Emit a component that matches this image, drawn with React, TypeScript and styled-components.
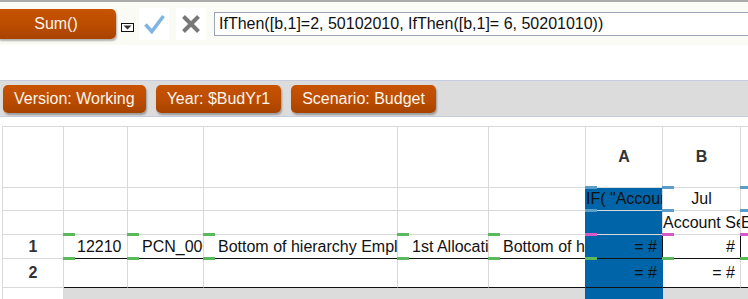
import React from "react";
import styled, { createGlobalStyle } from "styled-components";

const Global = createGlobalStyle`
  html, body { margin: 0; padding: 0; background: #fff; }
  body { font-family: "Liberation Sans", Arial, sans-serif; }
  * { box-sizing: border-box; }
`;

const Page = styled.div`
  width: 748px;
  height: 299px;
  overflow: hidden;
  display: flex;
  flex-direction: column;
  background: #fff;
`;

const Toolbar = styled.div`
  height: 45px;
  flex-shrink: 0;
  border-top: 2px solid #ababab;
  background: #fbfbf6;
  display: flex;
  align-items: center;
`;

const SumButton = styled.button`
  margin-left: -4px;
  width: 120px;
  height: 30px;
  flex-shrink: 0;
  border: none;
  border-radius: 5px;
  background: linear-gradient(to bottom, #c85300 0%, #b94b00 60%, #a64300 100%);
  box-shadow: 1px 2px 2px rgba(0, 0, 0, 0.3);
  color: #fbf5ee;
  font-family: "Liberation Sans", Arial, sans-serif;
  font-size: 16px;
  padding: 0;
`;

const DropBox = styled.div`
  margin-left: 5px;
  margin-top: 8px;
  width: 13px;
  height: 9px;
  flex-shrink: 0;
  border: 1px solid #111;
  background: #fff;
  display: flex;
  align-items: center;
  justify-content: center;
`;

const IconButton = styled.div<{ $ml: number }>`
  margin-left: ${(p) => p.$ml}px;
  width: 30px;
  height: 32px;
  flex-shrink: 0;
  background: #fff;
  display: flex;
  align-items: center;
  justify-content: center;
`;

const FormulaInput = styled.div`
  margin-left: 8px;
  width: 600px;
  height: 24px;
  flex-shrink: 0;
  border: 1px solid #9ca5b5;
  background: #fff;
  padding-left: 4px;
  display: flex;
  align-items: center;
  font-size: 16px;
  color: #111;
  white-space: nowrap;
`;

const Band = styled.div`
  margin-top: 35px;
  height: 37px;
  flex-shrink: 0;
  border-top: 1px solid #c6cde0;
  border-bottom: 1px solid #c6cde0;
  background: #dcdcdc;
  display: flex;
  align-items: center;
  gap: 10px;
  padding-left: 3px;
  padding-top: 1px;
`;

const PovButton = styled.button`
  height: 28px;
  padding: 0 11px;
  border: none;
  border-radius: 5px;
  background: linear-gradient(to bottom, #c85300 0%, #b94b00 60%, #a64300 100%);
  box-shadow: 1px 2px 2px rgba(0, 0, 0, 0.3);
  color: #fbf5ee;
  font-family: "Liberation Sans", Arial, sans-serif;
  font-size: 16px;
  white-space: nowrap;
`;

const COLS = [61, 64, 76, 194, 91, 97, 77, 78, 80];
const ROWS = [61, 23, 24, 24, 29, 12];

const Grid = styled.div`
  margin-top: 9px;
  margin-left: 2px;
  display: grid;
  grid-template-columns: ${COLS.map((c) => `${c}px`).join(" ")};
  grid-template-rows: ${ROWS.map((r) => `${r}px`).join(" ")};
  border-left: 1px solid #d9d9d9;
  border-top: 1px solid #d9d9d9;
  width: max-content;
  flex-shrink: 0;
`;

const Cell = styled.div<{
  $bg?: string;
  $bb?: string;
  $br?: string;
  $pl?: number;
  $pr?: number;
}>`
  position: relative;
  display: flex;
  align-items: center;
  min-width: 0;
  background: ${(p) => p.$bg ?? "transparent"};
  border-right: 1px solid ${(p) => p.$br ?? "#d9d9d9"};
  border-bottom: 1px solid ${(p) => p.$bb ?? "#d9d9d9"};
  padding-left: ${(p) => p.$pl ?? 0}px;
  padding-right: ${(p) => p.$pr ?? 0}px;
`;

const CellText = styled.span<{ $align?: string; $bold?: boolean }>`
  display: block;
  width: 100%;
  overflow: hidden;
  white-space: nowrap;
  text-align: ${(p) => p.$align ?? "left"};
  font-size: 16px;
  font-weight: ${(p) => (p.$bold ? 700 : 400)};
  color: ${(p) => (p.$bold ? "#333" : "#111")};
`;

const Mark = styled.span<{ $color: string; $at: "top" | "bottom" }>`
  position: absolute;
  left: -1px;
  ${(p) => (p.$at === "top" ? "top: -2px;" : "bottom: -2px;")}
  width: 12px;
  height: 3px;
  background: ${(p) => p.$color};
  z-index: 2;
`;

type MarkDef = { color: string; at: "top" | "bottom" };
type CellDef = {
  t?: string;
  al?: "left" | "center" | "right";
  b?: boolean;
  bg?: string;
  pl?: number;
  pr?: number;
  bb?: string;
  br?: string;
  marks?: MarkDef[];
};

const GREEN = "#5cb85c";
const SKY = "#5b9dc7";
const PINK = "#d65ac6";
const BLUE = "#0064a8";
const GREY = "#dcdcdc";
const BLACK = "#111";

const e = (n: number, d: CellDef = {}): CellDef[] => Array.from({ length: n }, () => ({ ...d }));

const sky: MarkDef[] = [{ color: SKY, at: "top" }];
const g2: MarkDef[] = [
  { color: GREEN, at: "top" },
  { color: GREEN, at: "bottom" },
];
const pg: MarkDef[] = [
  { color: PINK, at: "top" },
  { color: GREEN, at: "bottom" },
];

const rows: CellDef[][] = [
  [
    ...e(6),
    { t: "A", al: "center", b: true },
    { t: "B", al: "center", b: true },
    {},
  ],
  [
    ...e(5),
    { br: BLUE },
    { t: 'IF( "Account Segment"', bg: BLUE, marks: sky },
    { t: "Jul", al: "center", marks: sky },
    { marks: sky },
  ],
  [
    ...e(5),
    { br: BLUE },
    { bg: BLUE, marks: sky },
    { t: "Account Segment", marks: sky },
    { t: "Entity", marks: sky },
  ],
  [
    { t: "1", al: "center", b: true },
    { t: "12210", pl: 13, bb: BLACK, marks: g2 },
    { t: "PCN_0001", pl: 14, bb: BLACK, marks: g2 },
    { t: "Bottom of hierarchy Employee", pl: 14, bb: BLACK, marks: g2 },
    { t: "1st Allocation", pl: 14, bb: BLACK, marks: g2 },
    { t: "Bottom of hierarchy", pl: 14, bb: BLACK, br: BLUE, marks: g2 },
    { t: "= #", al: "right", pr: 5, bg: BLUE, bb: BLACK, br: BLACK, marks: pg },
    { t: "#", al: "right", pr: 5, bb: BLACK, br: BLACK, marks: pg },
    { bb: BLACK, marks: pg },
  ],
  [
    { t: "2", al: "center", b: true },
    ...e(4, { bb: BLACK }),
    { bb: BLACK, br: BLUE },
    { t: "= #", al: "right", pr: 5, bg: BLUE, bb: BLACK, br: BLUE },
    { t: "= #", al: "right", pr: 5, bb: BLACK },
    { bb: BLACK },
  ],
  [
    { bb: "transparent" },
    ...e(4, { bg: GREY, bb: GREY, br: GREY }),
    { bg: GREY, bb: GREY, br: BLUE },
    { bg: BLUE, bb: BLUE, br: BLUE },
    ...e(2, { bg: GREY, bb: GREY, br: GREY }),
  ],
];

const CheckIcon = () => (
  <svg width="21" height="20" viewBox="0 0 21 20">
    <path d="M1.5 10.5 L7.8 17.5 L19.5 2" fill="none" stroke="#7fb5e5" strokeWidth="3.6" />
  </svg>
);

const CrossIcon = () => (
  <svg width="20" height="20" viewBox="0 0 20 20">
    <path d="M2.5 2.5 L17.5 17.5 M17.5 2.5 L2.5 17.5" fill="none" stroke="#787878" strokeWidth="4" />
  </svg>
);

const DropIcon = () => (
  <svg width="9" height="5" viewBox="0 0 9 5">
    <path d="M0.5 0.5 H8.5 L4.5 4.5 Z" fill="#333" />
  </svg>
);

export default function App() {
  return (
    <Page>
      <Global />
      <Toolbar>
        <SumButton>Sum()</SumButton>
        <DropBox>
          <DropIcon />
        </DropBox>
        <IconButton $ml={5}>
          <CheckIcon />
        </IconButton>
        <IconButton $ml={7}>
          <CrossIcon />
        </IconButton>
        <FormulaInput>IfThen([b,1]=2, 50102010, IfThen([b,1]= 6, 50201010))</FormulaInput>
      </Toolbar>
      <Band>
        <PovButton>Version: Working</PovButton>
        <PovButton>Year: $BudYr1</PovButton>
        <PovButton>Scenario: Budget</PovButton>
      </Band>
      <Grid>
        {rows.map((row, ri) =>
          row.map((c, ci) => (
            <Cell key={`${ri}-${ci}`} $bg={c.bg} $bb={c.bb} $br={c.br} $pl={c.pl} $pr={c.pr}>
              {c.t !== undefined && (
                <CellText $align={c.al} $bold={c.b}>
                  {c.t}
                </CellText>
              )}
              {c.marks?.map((m, mi) => (
                <Mark key={mi} $color={m.color} $at={m.at} />
              ))}
            </Cell>
          ))
        )}
      </Grid>
    </Page>
  );
}
